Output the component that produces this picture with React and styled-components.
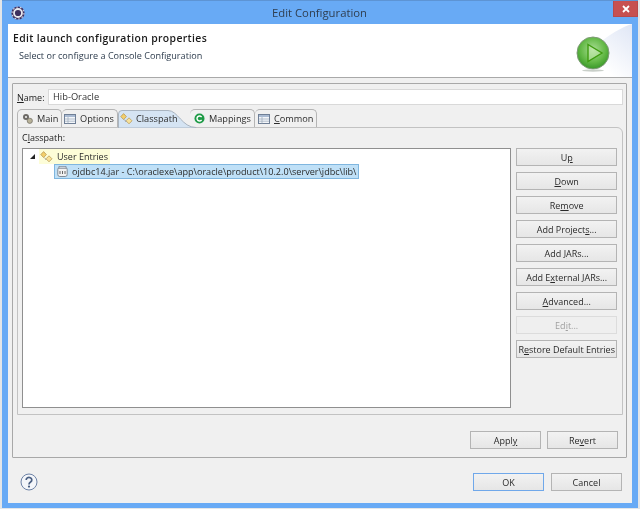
import styled, { createGlobalStyle } from "styled-components"

const GlobalStyle = createGlobalStyle`
html, body {
    margin: 0;
    padding: 0;
    background: #e4e6e8;
}
#root {
    width: 640px;
    height: 509px;
    overflow: hidden;
}
`

const Desktop = styled.div`
width: 640px;
height: 509px;
box-sizing: border-box;
padding: 0 2px 1px 2px;
font-family: "Open Sans", "Noto Sans", sans-serif;
font-size: 9px;
color: #222;
filter: blur(0.35px);
`
const Ventana = styled.div`
height: 100%;
box-sizing: border-box;
background: #68aaf5;
border-top: 1px solid #5d94d4;
padding: 0 6px 5px 6px;
display: flex;
flex-direction: column;
`
const BarraTitulo = styled.div`
height: 23px;
flex: none;
display: flex;
align-items: flex-start;
justify-content: space-between;
margin: 0 -6px;
`
const LogoCaja = styled.div`
width: 30px;
height: 23px;
display: flex;
align-items: center;
justify-content: center;
margin-left: 1px;
`
const TextoTitulo = styled.div`
flex: 1;
text-align: center;
font-family: "Open Sans", sans-serif;
font-size: 11.3px;
line-height: 24px;
color: #2f3e50;
padding-right: 7px;
`
const Cerrar = styled.div`
width: 25px;
height: 16px;
background: #c75050;
color: white;
display: flex;
align-items: center;
justify-content: center;
border: 1px solid #b8494b;
border-top: none;
box-sizing: border-box;
`
const Contenido = styled.div`
flex: 1;
background: #f0f0f0;
display: flex;
flex-direction: column;
min-height: 0;
`
const Cabecera = styled.header`
position: relative;
height: 54px;
box-sizing: border-box;
flex: none;
background: white;
border-bottom: 1px solid #a9a9a9;
padding: 7px 4px 0 5px;
`
const CabeceraFondo = styled.svg`
position: absolute;
right: 0;
top: 0;
`
const IconoPlay = styled.svg`
position: absolute;
right: 22px;
top: 12px;
`
const CabeceraTitulo = styled.div`
font-size: 10.4px;
font-weight: 600;
line-height: 14px;
letter-spacing: 0.36px;
color: #1a1a1a;
`
const CabeceraSub = styled.div`
font-size: 9.1px;
line-height: 12px;
margin: 5px 0 0 6px;
color: #2c3b4c;
`
const Panel = styled.div`
margin: 5px 5px 0 4px;
height: 375px;
flex: none;
box-sizing: border-box;
border: 1px solid #a8a8a8;
border-radius: 1px;
padding: 5px 3px 0 4px;
display: flex;
flex-direction: column;
`
const FilaNombre = styled.div`
display: flex;
align-items: center;
height: 16px;
flex: none;
`
const Etiqueta = styled.label`
width: 31px;
flex: none;
`
const Entrada = styled.div`
flex: 1;
height: 16px;
box-sizing: border-box;
background: white;
border: 1px solid #d9d9d9;
padding-left: 4px;
line-height: 14px;
font-size: 9.3px;
color: #333;
`
const Tecla = styled.span`
text-decoration: underline;
text-underline-offset: 1px;
text-decoration-thickness: 1px;
`
const Pestanas = styled.div`
display: flex;
height: 18px;
flex: none;
margin-top: 4px;
`
const Pestana = styled.div`
position: relative;
height: 18px;
box-sizing: border-box;
width: ${({ ancho }) => ancho}px;
border: 1px solid ${({ sinBorde }) => (sinBorde ? "transparent" : "#b5b5b5")};
border-bottom: none;
border-left-width: ${({ primera }) => (primera ? 1 : 0)}px;
border-radius: 5px 5px 0 0;
display: flex;
align-items: center;
gap: ${({ hueco }) => hueco || 4}px;
padding-left: ${({ sangria }) => sangria || 4}px;
font-size: 9.2px;
color: #2d2d2d;
`
const PestanaFondo = styled.svg`
position: absolute;
left: 0;
top: 0;
`
const PestanaTexto = styled.span`
position: relative;
`
const PanelTab = styled.div`
height: 288px;
flex: none;
box-sizing: border-box;
border: 1px solid #c2c2c2;
border-radius: 0 6px 0 0;
padding: 3px 5px 4px 4px;
display: flex;
flex-direction: column;
`
const TituloLista = styled.div`
line-height: 14px;
height: 17px;
`
const Columnas = styled.div`
display: flex;
gap: 5px;
flex: 1;
`
const Arbol = styled.div`
width: 491px;
height: 260px;
box-sizing: border-box;
background: white;
border: 1px solid #8f8f8f;
padding: 0 0 0 7px;
`
const FilaArbol = styled.div`
display: flex;
align-items: center;
height: 15px;
margin-left: ${({ nivel }) => (nivel || 0) * 24}px;
`
const Flecha = styled.svg`
margin-right: 4px;
flex: none;
`
const Seleccion = styled.div`
display: flex;
align-items: center;
gap: 4px;
height: ${({ alto }) => alto}px;
padding: 0 2px 0 ${({ sangria }) => sangria}px;
background: ${({ activa }) => (activa ? "#bfe0f7" : "#fdfdd8")};
border: ${({ activa }) => (activa ? "1px solid #7fb6df" : "none")};
box-sizing: border-box;
font-size: ${({ activa }) => (activa ? 9.1 : 9)}px;
color: #2a2a2a;
`
const ColBotones = styled.div`
width: 101px;
display: flex;
flex-direction: column;
gap: 6px;
`
const Boton = styled.button`
height: 18px;
width: ${({ ancho }) => (ancho ? ancho + "px" : "100%")};
box-sizing: border-box;
padding: 0;
font-family: inherit;
font-size: 9px;
color: ${({ disabled }) => (disabled ? "#a0a0a0" : "#2a2a2a")};
background: ${({ disabled }) => (disabled ? "#efefef" : "linear-gradient(#f2f2f2, #e6e6e6)")};
border: 1px solid ${({ disabled, activo }) => (disabled ? "#dcdcdc" : activo ? "#70a8ea" : "#b4b4b4")};
`
const FilaAplicar = styled.div`
display: flex;
justify-content: flex-end;
gap: 6px;
padding: 16px 5px 0 0;
`
const Pie = styled.footer`
display: flex;
align-items: center;
justify-content: space-between;
padding: 15px 10px 0 12px;
`
const GrupoPie = styled.div`
display: flex;
gap: 7px;
`

const IconoEclipse = () => (
    <svg width="14" height="14" viewBox="0 0 14 14">
        <circle cx="7" cy="7" r="6.6" fill="#3d2f5f" />
        <circle cx="7" cy="7" r="4" fill="none" stroke="#e8e8ee" strokeWidth="1.8" />
        <circle cx="7" cy="7" r="6" fill="none" stroke="#cfcfe0" strokeWidth="1.2" strokeDasharray="1.6 2.1" />
    </svg>
)

const IconoMain = () => (
    <svg width="11" height="11" viewBox="0 0 11 11">
        <circle cx="4" cy="4" r="3" fill="#6d6a66" />
        <circle cx="4" cy="4" r="1.1" fill="#efefef" />
        <circle cx="7.8" cy="7.8" r="2.6" fill="#b9b39a" stroke="#77736a" strokeWidth="0.8" />
    </svg>
)

const IconoTabla = () => (
    <svg width="12" height="10" viewBox="0 0 12 10" style={{ flex: "none" }}>
        <rect x="0.5" y="0.5" width="11" height="9" fill="#f3f6fa" stroke="#6f7f96" />
        <rect x="1" y="1" width="10" height="2" fill="#a9bad2" />
        <path d="M1 5h10M1 7.2h10M4 3v6.5" stroke="#9aa7b8" strokeWidth="0.7" />
    </svg>
)

const IconoRombos = () => (
    <svg width="13" height="12" viewBox="0 0 13 12" style={{ flex: "none", position: "relative" }}>
        <path d="M3.6 0.6 6.4 3.6 3.6 6.6 0.8 3.6Z" fill="#f2cf6c" stroke="#b3924a" strokeWidth="0.7" />
        <path d="M9 4.8 12 7.8 9 10.8 6 7.8Z" fill="#f8e29a" stroke="#b3924a" strokeWidth="0.7" />
        <path d="M4.6 6.6 6 9" stroke="#8a8a8a" strokeWidth="0.7" />
    </svg>
)

const IconoC = () => (
    <svg width="11" height="11" viewBox="0 0 11 11" style={{ flex: "none", position: "relative" }}>
        <circle cx="5.5" cy="5.5" r="5" fill="#1d9a45" />
        <path d="M7.6 4.1A2.5 2.5 0 1 0 7.6 6.9" fill="none" stroke="white" strokeWidth="1.4" />
    </svg>
)

const IconoJar = () => (
    <svg width="11" height="11" viewBox="0 0 11 11" style={{ flex: "none" }}>
        <rect x="0.8" y="1.5" width="9.4" height="9" rx="2" fill="#f2f2f2" stroke="#77818c" strokeWidth="0.9" />
        <rect x="2" y="0.5" width="7" height="2" fill="#c9d0d8" stroke="#77818c" strokeWidth="0.6" />
        <path d="M3 5v3M5.5 5v3M8 5v3" stroke="#555" strokeWidth="0.9" />
    </svg>
)

const IconoAyuda = () => (
    <svg width="18" height="18" viewBox="0 0 18 18">
        <circle cx="9" cy="9" r="8" fill="#f4f6fa" stroke="#6d82a6" strokeWidth="1" />
        <path d="M6.2 7a2.8 2.5 0 1 1 4.4 2c-1 .7-1.6 1.2-1.6 2.4" fill="none" stroke="#4a5f82" strokeWidth="1.7" />
        <circle cx="9" cy="13.6" r="1.1" fill="#4a5f82" />
    </svg>
)

const botones = [
    [["U"], ["p", true]],
    [["D", true], ["own"]],
    [["Re"], ["m", true], ["ove"]],
    [["Add Project"], ["s", true], ["..."]],
    [["Add "], ["J", true], ["ARs..."]],
    [["Add E"], ["x", true], ["ternal JARs..."]],
    [["A", true], ["dvanced..."]],
    [["Ed"], ["i", true], ["t..."]],
    [["R"], ["e", true], ["store Default Entries"]],
]

const Texto = ({ partes }) =>
    partes.map(([t, clave], i) => (clave ? <Tecla key={i}>{t}</Tecla> : <span key={i}>{t}</span>))

const App = () => {
    return <Desktop>
        <GlobalStyle />
        <Ventana>
            <BarraTitulo>
                <LogoCaja><IconoEclipse /></LogoCaja>
                <TextoTitulo>Edit Configuration</TextoTitulo>
                <Cerrar>
                    <svg width="8" height="8" viewBox="0 0 8 8">
                        <path d="M1 1 7 7M7 1 1 7" stroke="white" strokeWidth="1.8" />
                    </svg>
                </Cerrar>
            </BarraTitulo>
            <Contenido>
                <Cabecera>
                    <CabeceraFondo width="90" height="53" viewBox="0 0 90 53">
                        <defs>
                            <linearGradient id="fondoCab" x1="0" y1="1" x2="1" y2="0">
                                <stop offset="0.35" stopColor="#ffffff" />
                                <stop offset="1" stopColor="#dfe6f5" />
                            </linearGradient>
                        </defs>
                        <path d="M90 0C70 6 40 30 28 53H90Z" fill="url(#fondoCab)" />
                    </CabeceraFondo>
                    <IconoPlay width="34" height="36" viewBox="0 0 34 36">
                        <defs>
                            <radialGradient id="bola" cx="0.5" cy="0.4" r="0.65">
                                <stop offset="0" stopColor="#a9dd95" />
                                <stop offset="0.6" stopColor="#62b845" />
                                <stop offset="1" stopColor="#2f8f22" />
                            </radialGradient>
                        </defs>
                        <circle cx="17" cy="17" r="16" fill="url(#bola)" stroke="#7f9a78" strokeWidth="1" />
                        <path d="M12 8.5 26 17 12 25.5Z" fill="#d3efc0" fillOpacity="0.5" stroke="#3f9c10" strokeWidth="1.4" />
                        <ellipse cx="17" cy="34.5" rx="11" ry="1.2" fill="#c9cfc9" />
                    </IconoPlay>
                    <CabeceraTitulo>Edit launch configuration properties</CabeceraTitulo>
                    <CabeceraSub>Select or configure a Console Configuration</CabeceraSub>
                </Cabecera>
                <Panel>
                    <FilaNombre>
                        <Etiqueta><Tecla>N</Tecla>ame:</Etiqueta>
                        <Entrada>Hib-Oracle</Entrada>
                    </FilaNombre>
                    <Pestanas>
                        <Pestana primera ancho={45} sangria={4}><IconoMain /><PestanaTexto>Main</PestanaTexto></Pestana>
                        <Pestana ancho={56} sangria={2}><IconoTabla /><PestanaTexto>Options</PestanaTexto></Pestana>
                        <Pestana ancho={72} sinBorde sangria={2} hueco={3}>
                            <PestanaFondo width="80" height="18" viewBox="0 0 80 18">
                                <path d="M0.5 18V4Q0.5 0.5 4 0.5H50C60 0.5 64 17.5 78 17.5V18Z" fill="#d5e4f3" stroke="#a9b4c0" />
                            </PestanaFondo>
                            <IconoRombos /><PestanaTexto>Classpath</PestanaTexto>
                        </Pestana>
                        <Pestana ancho={65} sangria={4}><IconoC /><PestanaTexto>Mappings</PestanaTexto></Pestana>
                        <Pestana ancho={62} sangria={3}><IconoTabla /><PestanaTexto><Tecla>C</Tecla>ommon</PestanaTexto></Pestana>
                    </Pestanas>
                    <PanelTab>
                        <TituloLista>C<Tecla>l</Tecla>asspath:</TituloLista>
                        <Columnas>
                            <Arbol>
                                <FilaArbol>
                                    <Flecha width="5" height="5" viewBox="0 0 5 5"><path d="M5 0V5H0Z" fill="#222" /></Flecha>
                                    <Seleccion alto={15} sangria={1}>
                                        <IconoRombos />User Entries
                                    </Seleccion>
                                </FilaArbol>
                                <FilaArbol nivel={1}>
                                    <Seleccion activa alto={15} sangria={2}>
                                        <IconoJar />ojdbc14.jar - C:\oraclexe\app\oracle\product\10.2.0\server\jdbc\lib\
                                    </Seleccion>
                                </FilaArbol>
                            </Arbol>
                            <ColBotones>
                                {botones.map((partes, i) => (
                                    <Boton key={i} disabled={i === 7}><Texto partes={partes} /></Boton>
                                ))}
                            </ColBotones>
                        </Columnas>
                    </PanelTab>
                    <FilaAplicar>
                        <Boton ancho={71}>Appl<Tecla>y</Tecla></Boton>
                        <Boton ancho={71}>Re<Tecla>v</Tecla>ert</Boton>
                    </FilaAplicar>
                </Panel>
                <Pie>
                    <IconoAyuda />
                    <GrupoPie>
                        <Boton ancho={71} activo>OK</Boton>
                        <Boton ancho={71}>Cancel</Boton>
                    </GrupoPie>
                </Pie>
            </Contenido>
        </Ventana>
    </Desktop>
}

export default App
